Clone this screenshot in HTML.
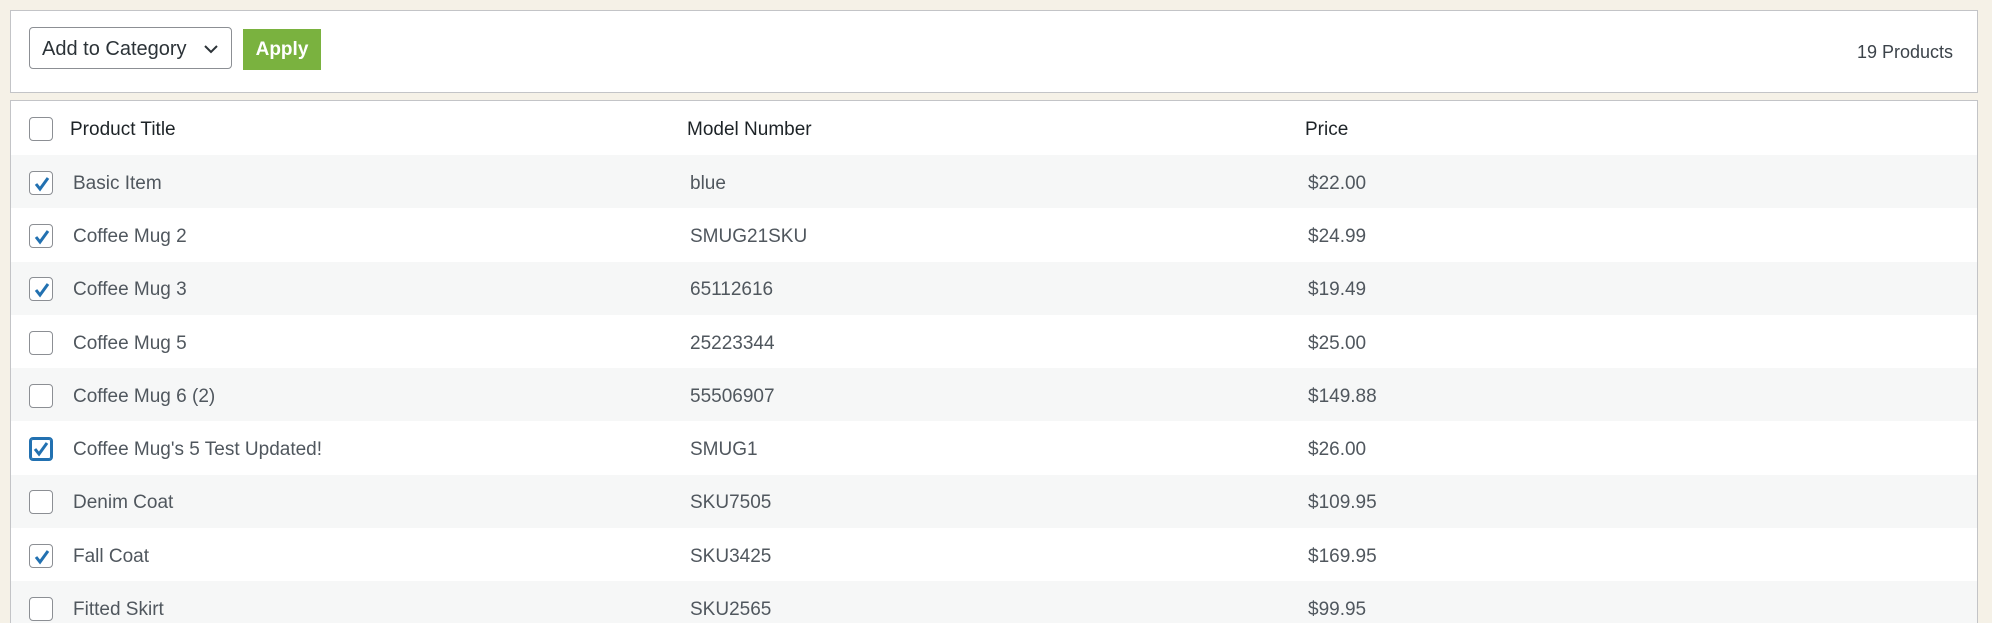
<!DOCTYPE html>
<html style="overflow:hidden;height:623px"><head><style>
body{margin:0;width:1992px;height:623px;overflow:hidden;background:#f5f1e7;font-family:"Liberation Sans",sans-serif;position:relative}
.top{position:absolute;left:10px;top:10px;width:1966px;height:81px;background:#fff;border:1px solid #c3c4c7;}
.sel{position:absolute;left:18px;top:16px;width:203px;height:42px;border:1px solid #8c8f94;border-radius:4px;box-sizing:border-box;font-size:20px;color:#2c3338;line-height:42px;padding-left:12px;}
.sel svg{position:absolute;right:12px;top:15px}
.apply{position:absolute;left:232px;top:18px;width:78px;height:41px;background:#7ab23f;color:#fff;font-weight:bold;font-size:19px;line-height:41px;text-align:center;}
.cnt{position:absolute;right:24px;top:31px;font-size:18px;color:#3c434a;}
.tbl{position:absolute;left:10px;top:100px;width:1966px;height:540px;background:#fff;border:1px solid #c3c4c7;}
.hd{position:absolute;left:0;top:0;width:100%;height:54px;border-bottom:1px solid #c3c4c7;font-size:19px;color:#1d2327;}
.row{position:absolute;left:0;width:100%;height:53.3px;font-size:19px;color:#50575e;}
.row.s{background:#f6f7f7}
.c{position:absolute;top:calc(50% + 2px);transform:translateY(-50%);}
.cb{position:absolute;left:18px;top:50%;margin-top:-11px;width:24px;height:24px;box-sizing:border-box;border:1px solid #8c8f94;border-radius:4px;background:#fff;}
.cb.f{border:2px solid #2271b1;box-shadow:0 0 0 1px #2271b1 inset}
.cb svg{position:absolute;left:2px;top:2px}
</style></head><body>
<div class="top">
<div class="sel">Add to Category<svg width="16" height="12" viewBox="0 0 16 12"><path d="M2 3l6 6 6-6" stroke="#2c3338" stroke-width="2" fill="none"/></svg></div>
<div class="apply">Apply</div>
<div class="cnt">19 Products</div>
</div>
<div class="tbl">
<div class="hd"><div class="cb"></div><span class="c" style="left:59px">Product Title</span><span class="c" style="left:676px">Model Number</span><span class="c" style="left:1294px">Price</span></div>
</div>
<div style="position:absolute;left:11px;top:155px;width:1966px">
<div class="row s" style="top:0"><div class="cb"><svg width="20" height="20"><path d="M4 10l4 5 8-11" stroke="#2271b1" stroke-width="3" fill="none"/></svg></div><span class="c" style="left:62px">Basic Item</span><span class="c" style="left:679px">blue</span><span class="c" style="left:1297px">$22.00</span></div>
<div class="row" style="top:53.3px"><div class="cb"><svg width="20" height="20"><path d="M4 10l4 5 8-11" stroke="#2271b1" stroke-width="3" fill="none"/></svg></div><span class="c" style="left:62px">Coffee Mug 2</span><span class="c" style="left:679px">SMUG21SKU</span><span class="c" style="left:1297px">$24.99</span></div>
<div class="row s" style="top:106.6px"><div class="cb"><svg width="20" height="20"><path d="M4 10l4 5 8-11" stroke="#2271b1" stroke-width="3" fill="none"/></svg></div><span class="c" style="left:62px">Coffee Mug 3</span><span class="c" style="left:679px">65112616</span><span class="c" style="left:1297px">$19.49</span></div>
<div class="row" style="top:159.9px"><div class="cb"></div><span class="c" style="left:62px">Coffee Mug 5</span><span class="c" style="left:679px">25223344</span><span class="c" style="left:1297px">$25.00</span></div>
<div class="row s" style="top:213.2px"><div class="cb"></div><span class="c" style="left:62px">Coffee Mug 6 (2)</span><span class="c" style="left:679px">55506907</span><span class="c" style="left:1297px">$149.88</span></div>
<div class="row" style="top:266.5px"><div class="cb f"><svg width="20" height="20" style="left:0;top:0"><path d="M4 10l4 5 8-11" stroke="#2271b1" stroke-width="3" fill="none"/></svg></div><span class="c" style="left:62px">Coffee Mug's 5 Test Updated!</span><span class="c" style="left:679px">SMUG1</span><span class="c" style="left:1297px">$26.00</span></div>
<div class="row s" style="top:319.8px"><div class="cb"></div><span class="c" style="left:62px">Denim Coat</span><span class="c" style="left:679px">SKU7505</span><span class="c" style="left:1297px">$109.95</span></div>
<div class="row" style="top:373.1px"><div class="cb"><svg width="20" height="20"><path d="M4 10l4 5 8-11" stroke="#2271b1" stroke-width="3" fill="none"/></svg></div><span class="c" style="left:62px">Fall Coat</span><span class="c" style="left:679px">SKU3425</span><span class="c" style="left:1297px">$169.95</span></div>
<div class="row s" style="top:426.4px"><div class="cb"></div><span class="c" style="left:62px">Fitted Skirt</span><span class="c" style="left:679px">SKU2565</span><span class="c" style="left:1297px">$99.95</span></div>
</div>
</body></html>
